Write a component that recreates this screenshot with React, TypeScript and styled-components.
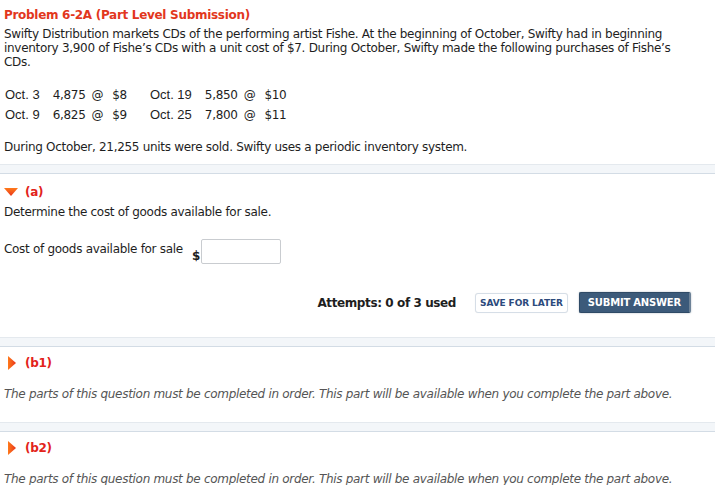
import styled, { createGlobalStyle } from "styled-components";

const GlobalStyle = createGlobalStyle`
	body {
		margin: 0;
		background: #fff;
		font-family: "DejaVu Sans", Verdana, sans-serif;
		color: #1e1e1e;
	}
`;

const purchases = [
	[
		{ date: "Oct. 3", units: "4,875", cost: "$8" },
		{ date: "Oct. 19", units: "5,850", cost: "$10" },
	],
	[
		{ date: "Oct. 9", units: "6,825", cost: "$9" },
		{ date: "Oct. 25", units: "7,800", cost: "$11" },
	],
];

const LOCKED =
	"The parts of this question must be completed in order. This part will be available when you complete the part above.";

function Arrow({ open }: { open?: boolean }) {
	return open ? (
		<DownArrow width="14" height="8" viewBox="0 0 14 8">
			<defs>
				<linearGradient id="gd" x1="0" y1="0" x2="0" y2="1">
					<stop offset="0" stopColor="#ff7a1a" />
					<stop offset="1" stopColor="#e8341c" />
				</linearGradient>
			</defs>
			<polygon points="0,0 14,0 7,8" fill="url(#gd)" />
		</DownArrow>
	) : (
		<RightArrow width="8" height="14" viewBox="0 0 8 14">
			<defs>
				<linearGradient id="gr" x1="0" y1="0" x2="1" y2="0">
					<stop offset="0" stopColor="#ff7a1a" />
					<stop offset="1" stopColor="#e8341c" />
				</linearGradient>
			</defs>
			<polygon points="0,0 8,7 0,14" fill="url(#gr)" />
		</RightArrow>
	);
}

export default function App() {
	return (
		<>
			<GlobalStyle />
			<Page>
				<Intro>
					<Title>Problem 6-2A (Part Level Submission)</Title>
					<Text>
						Swifty Distribution markets CDs of the performing artist Fishe. At the
						beginning of October, Swifty had in beginning inventory 3,900 of
						Fishe’s CDs with a unit cost of $7. During October, Swifty made the
						following purchases of Fishe’s CDs.
					</Text>
					<Purchases>
						<tbody>
							{purchases.map((row, i) => (
								<tr key={i}>
									{row.map((p) => (
										<>
											<DateCell key={p.date}>{p.date}</DateCell>
											<UnitsCell>{p.units}</UnitsCell>
											<AtCell>@</AtCell>
											<CostCell>{p.cost}</CostCell>
										</>
									))}
								</tr>
							))}
						</tbody>
					</Purchases>
					<Text>
						During October, 21,255 units were sold. Swifty uses a periodic
						inventory system.
					</Text>
				</Intro>

				<Divider />

				<Part>
					<PartHeader>
						<Arrow open />
						<PartLabel>(a)</PartLabel>
					</PartHeader>
					<Text>Determine the cost of goods available for sale.</Text>
					<AnswerRow>
						<AnswerLabel>Cost of goods available for sale</AnswerLabel>
						<Dollar>$</Dollar>
						<AmountInput type="text" />
					</AnswerRow>
					<Actions>
						<Attempts>Attempts: 0 of 3 used</Attempts>
						<SaveButton>SAVE FOR LATER</SaveButton>
						<SubmitButton>SUBMIT ANSWER</SubmitButton>
					</Actions>
				</Part>

				<Divider />

				<Part $locked>
					<PartHeader>
						<Arrow />
						<PartLabel>(b1)</PartLabel>
					</PartHeader>
					<Locked>{LOCKED}</Locked>
				</Part>

				<Divider />

				<Part $locked>
					<PartHeader>
						<Arrow />
						<PartLabel>(b2)</PartLabel>
					</PartHeader>
					<Locked>{LOCKED}</Locked>
				</Part>
			</Page>
		</>
	);
}

const Page = styled.div`
	width: 715px;
	font-size: 12px;
	line-height: 14px;
	letter-spacing: -0.3px;
`;

const Intro = styled.div`
	padding: 8px 40px 10px 4px;
`;

const Title = styled.div`
	color: #e2371d;
	font-weight: bold;
	margin-bottom: 5px;
`;

const Text = styled.p`
	margin: 0;
`;

const Purchases = styled.table`
	border-collapse: collapse;
	margin: 16px 0 15px 0;

	td {
		padding: 3px 0;
		white-space: nowrap;
	}
`;

const DateCell = styled.td`
	font-family: "Liberation Sans", Arial, sans-serif;
	font-size: 13px;
	letter-spacing: 0;
	&& {
		padding-left: 1px;
		padding-right: 13px;
	}
`;

const UnitsCell = styled.td`
	&& {
		padding-right: 6px;
	}
`;

const AtCell = styled.td`
	&& {
		padding-right: 9px;
	}
`;

const CostCell = styled.td`
	&& {
		padding-right: 22px;
	}
`;

const Divider = styled.div`
	height: 8px;
	background: #f3f6f9;
	border-top: 1px solid #e4e9ee;
	border-bottom: 1px solid #d3dce5;
`;

const Part = styled.section<{ $locked?: boolean }>`
	padding: ${({ $locked }) => ($locked ? "8px 4px 21px" : "10px 4px 24px")};
`;

const PartHeader = styled.div`
	display: flex;
	align-items: center;
	gap: 7px;
	height: 16px;
	margin-bottom: 5px;
`;

const DownArrow = styled.svg`
	flex: none;
`;

const RightArrow = styled.svg`
	flex: none;
	margin-left: 4px;
	margin-right: 2px;
`;

const PartLabel = styled.span`
	color: #e2231a;
	font-weight: bold;
`;

const AnswerRow = styled.div`
	display: flex;
	align-items: flex-start;
	margin-top: 20px;
`;

const AnswerLabel = styled.span`
	padding-top: 3px;
	margin-right: 9px;
`;

const Dollar = styled.span`
	align-self: flex-end;
	font-weight: bold;
	margin-right: 1px;
	margin-bottom: 1px;
`;

const AmountInput = styled.input`
	width: 80px;
	height: 25px;
	box-sizing: border-box;
	border: 1px solid #c9ccd0;
	border-radius: 2px;
	background: #fff;
	padding: 0 4px;
`;

const Actions = styled.div`
	display: flex;
	justify-content: flex-end;
	align-items: center;
	gap: 11px;
	margin-top: 28px;
	padding-right: 20px;
`;

const Attempts = styled.span`
	font-weight: bold;
	margin-right: 8px;
	letter-spacing: -0.4px;
`;

const SaveButton = styled.button`
	height: 20px;
	padding: 0 4px;
	border: 1px solid #d6dee7;
	border-radius: 3px;
	background: #fff;
	color: #2c4a7c;
	font-family: "DejaVu Sans", Verdana, sans-serif;
	font-size: 9px;
	font-weight: bold;
	letter-spacing: -0.1px;
	box-shadow: 0 0 1px rgba(0, 0, 0, 0.1);
`;

const SubmitButton = styled.button`
	height: 21px;
	padding: 0 8px;
	border: 1px solid #2f4a66;
	border-right: 2px solid #6d8297;
	border-radius: 2px;
	background: #3c5a7a;
	color: #fff;
	font-family: "DejaVu Sans", Verdana, sans-serif;
	font-size: 10px;
	font-weight: bold;
	letter-spacing: -0.2px;
	box-shadow: 0 0 2px rgba(47, 74, 102, 0.4);
`;

const Locked = styled.p`
	margin: 16px 0 0;
	font-style: italic;
	color: #555;
`;
